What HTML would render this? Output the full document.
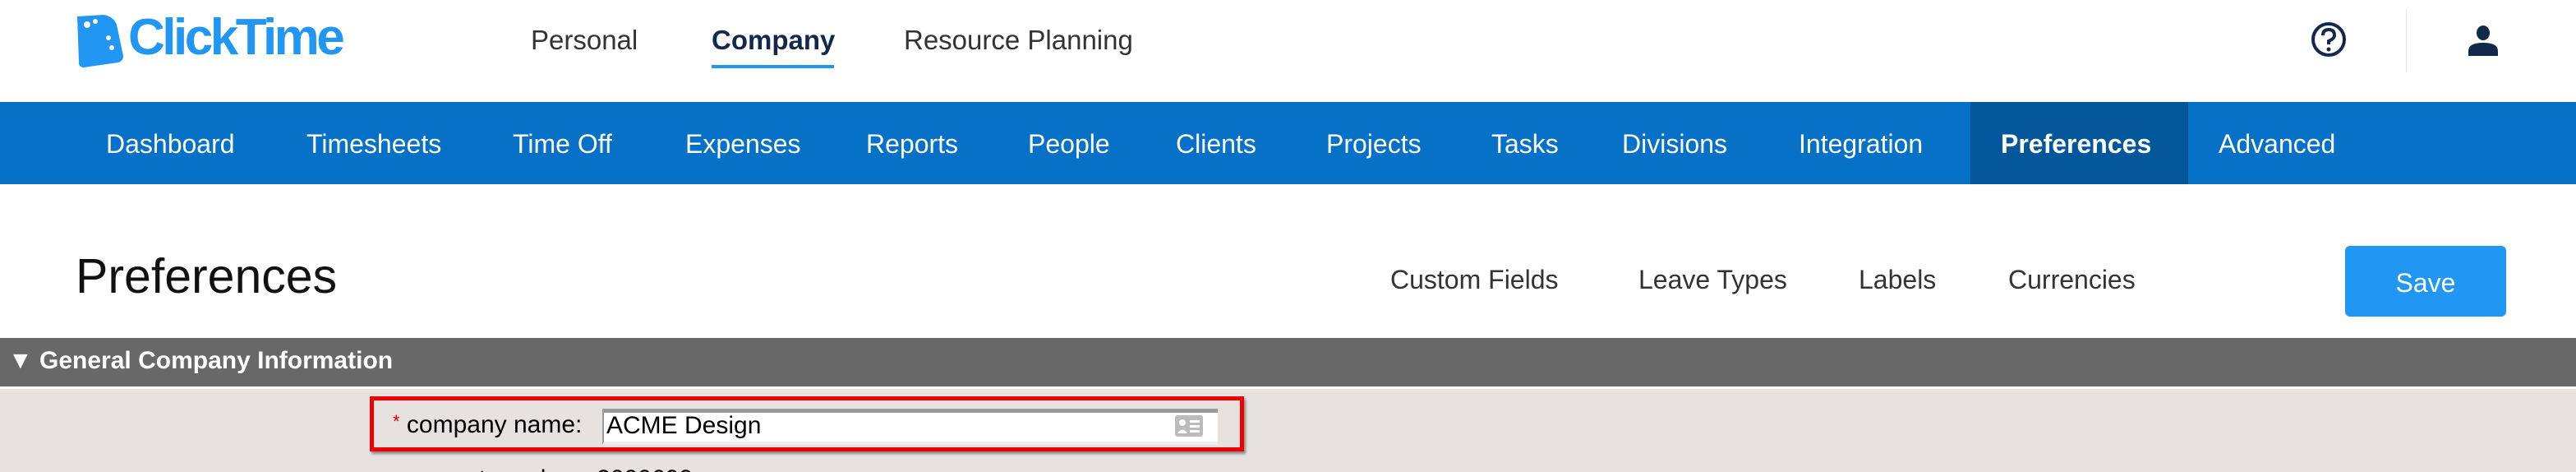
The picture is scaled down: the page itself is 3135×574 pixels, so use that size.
<!DOCTYPE html>
<html style="width:3135px;height:574px;overflow:hidden"><head><meta charset="utf-8"><style>
*{margin:0;padding:0;box-sizing:border-box}
body{width:3135px;height:574px;overflow:hidden;background:#fff;position:relative;font-family:"Liberation Sans",sans-serif}
.a{position:absolute;white-space:nowrap}
.top{font-size:33px;color:#333;top:30px}
.nav{position:absolute;top:124px;left:0;width:3135px;height:100px;background:#0671c6}
.nv{position:absolute;top:33px;font-size:32px;color:#fff}
.sub{font-size:32px;color:#333;top:322px}
</style></head><body>
<svg class="a" style="left:92px;top:16px" width="60" height="66" viewBox="0 0 60 66"><path d="M2 4 L34 2 Q46 4 50 14 L58 52 Q58 58 52 60 L10 66 Q4 66 4 60 Z" fill="#2196f3"/><circle cx="14" cy="14" r="4" fill="#fff"/><circle cx="24" cy="10" r="3" fill="#fff"/><circle cx="40" cy="30" r="3" fill="#fff"/><circle cx="44" cy="42" r="3" fill="#fff"/></svg>
<div class="a" style="left:156px;top:10px;font-size:62px;font-weight:bold;color:#2196f3;letter-spacing:-3.5px">ClickTime</div>
<div class="a top" style="left:646px">Personal</div>
<div class="a top" style="left:866px;font-weight:bold;color:#13294b">Company</div>
<div class="a" style="left:866px;top:79px;width:149px;height:4px;background:#2196f3"></div>
<div class="a top" style="left:1100px">Resource Planning</div>
<svg class="a" style="left:2812px;top:26px" width="44" height="44" viewBox="0 0 44 44"><circle cx="22" cy="22" r="19" fill="none" stroke="#13294b" stroke-width="4"/><path d="M15 17 Q15 10 22 10 Q29 10 29 17 Q29 21 22 24 L22 28" fill="none" stroke="#13294b" stroke-width="4"/><circle cx="22" cy="34" r="2.5" fill="#13294b"/></svg>
<div class="a" style="left:2928px;top:10px;width:1px;height:78px;background:#e5e5e5"></div>
<svg class="a" style="left:3004px;top:30px" width="36" height="38" viewBox="0 0 36 38"><ellipse cx="18" cy="10" rx="8" ry="9" fill="#13294b"/><path d="M0 38 L0 32 Q0 22 18 22 Q36 22 36 32 L36 38 Z" fill="#13294b"/></svg>
<div class="nav">
<div class="a" style="left:2398px;top:0;width:265px;height:100px;background:#02569a"></div>
<div class="nv" style="left:129px">Dashboard</div>
<div class="nv" style="left:373px">Timesheets</div>
<div class="nv" style="left:624px">Time Off</div>
<div class="nv" style="left:834px">Expenses</div>
<div class="nv" style="left:1054px">Reports</div>
<div class="nv" style="left:1251px">People</div>
<div class="nv" style="left:1431px">Clients</div>
<div class="nv" style="left:1614px">Projects</div>
<div class="nv" style="left:1815px">Tasks</div>
<div class="nv" style="left:1974px">Divisions</div>
<div class="nv" style="left:2189px">Integration</div>
<div class="nv" style="left:2435px;font-weight:bold">Preferences</div>
<div class="nv" style="left:2700px">Advanced</div>
</div>
<div class="a" style="left:92px;top:302px;font-size:59px;color:#111">Preferences</div>
<div class="a sub" style="left:1692px">Custom Fields</div>
<div class="a sub" style="left:1994px">Leave Types</div>
<div class="a sub" style="left:2262px">Labels</div>
<div class="a sub" style="left:2444px">Currencies</div>
<div class="a" style="left:2854px;top:299px;width:196px;height:86px;background:#2196f3;border-radius:6px;color:#fff;font-size:32px;text-align:center;line-height:90px">Save</div>
<div class="a" style="left:0;top:411px;width:3135px;height:59px;background:#686868"></div>
<div class="a" style="left:10px;top:422px;font-size:30px;font-weight:bold;color:#fff">▼ General Company Information</div>
<div class="a" style="left:0;top:473px;width:3135px;height:101px;background:#e6e2df"></div>
<div class="a" style="left:450px;top:482px;width:1064px;height:67px;border:5px solid #e00;box-shadow:2px 3px 3px #888"></div>
<div class="a" style="left:478px;top:500px;font-size:30px;color:#000"><span style="color:#d00;font-size:22px;vertical-align:top">*</span> company name:</div>
<div class="a" style="left:733px;top:497px;width:749px;height:44px;background:#fff;border-top:5px solid #999;border-left:2px solid #999;border-bottom:4px solid #eee"></div>
<div class="a" style="left:738px;top:501px;font-size:30px;color:#000">ACME Design</div>
<svg class="a" style="left:1430px;top:505px" width="34" height="26" viewBox="0 0 34 26"><rect width="34" height="26" rx="3" fill="#bbb"/><circle cx="9" cy="9" r="4" fill="#fff"/><path d="M3 22 Q9 13 15 22Z" fill="#fff"/><rect x="18" y="6" width="12" height="3" fill="#fff"/><rect x="18" y="12" width="12" height="3" fill="#fff"/><rect x="18" y="18" width="12" height="3" fill="#fff"/></svg>
<div class="a" style="left:486px;top:566px;font-size:30px;color:#000">account number:&nbsp; 2000600</div>
</body></html>
